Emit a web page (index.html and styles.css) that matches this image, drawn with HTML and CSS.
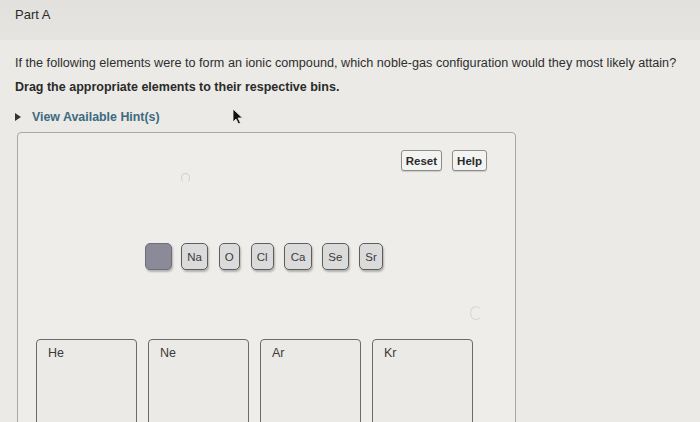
FILE: index.html
```html
<!DOCTYPE html>
<html>
<head>
<meta charset="utf-8">
<link rel="stylesheet" href="styles.css">
</head>
<body>
<div class="page">
  <header class="part-header">Part A</header>
  <main class="content">
    <p class="question">If the following elements were to form an ionic compound, which noble-gas configuration would they most likely attain?</p>
    <p class="instruction">Drag the appropriate elements to their respective bins.</p>
    <div class="hint"><span class="hint-arrow"></span><span class="hint-text">View Available Hint(s)</span></div>
    <section class="workspace">
      <div class="toolbar">
        <button class="btn">Reset</button>
        <button class="btn">Help</button>
      </div>
      <div class="tiles">
        <div class="tile tile-blank"></div>
        <div class="tile">Na</div>
        <div class="tile">O</div>
        <div class="tile">Cl</div>
        <div class="tile">Ca</div>
        <div class="tile">Se</div>
        <div class="tile">Sr</div>
      </div>
      <div class="bins">
        <div class="bin"><span class="bin-label">He</span></div>
        <div class="bin"><span class="bin-label">Ne</span></div>
        <div class="bin"><span class="bin-label">Ar</span></div>
        <div class="bin"><span class="bin-label">Kr</span></div>
      </div>
      <span class="glare glare-a"></span>
      <span class="glare glare-b"></span>
    </section>
  </main>
  <svg class="cursor" width="12" height="17" viewBox="0 0 12 17"><path d="M1 1 L1 14 L4 11 L6.5 16 L8.5 15 L6 10 L10.5 10 Z" fill="#111" stroke="#eee" stroke-width="0.8"/></svg>
</div>
</body>
</html>
```
FILE: styles.css
```css
html, body {
  margin: 0;
  padding: 0;
}
body {
  background: #ebeae6;
  font-family: "Liberation Sans", Arial, sans-serif;
  color: #2a2a2a;
  width: 700px;
  height: 422px;
  overflow: hidden;
}
.page {
  position: relative;
  height: 422px;
}
.part-header {
  height: 40px;
  box-sizing: border-box;
  padding: 7px 0 0 15px;
  font-size: 13px;
  background: linear-gradient(#e2e1dd, #e5e4e0);
  color: #2b2b2b;
}
.content {
  padding: 0 0 0 15px;
}
.question {
  margin: 15px 0 0;
  font-size: 12.65px;
  line-height: 16px;
  color: #2e2e2e;
}
.instruction {
  margin: 8px 0 0;
  font-size: 12.5px;
  font-weight: bold;
  line-height: 16px;
  color: #2a2a2a;
}
.hint {
  display: flex;
  align-items: center;
  margin-top: 14px;
  height: 16px;
}
.hint-arrow {
  width: 0;
  height: 0;
  border-top: 4.5px solid transparent;
  border-bottom: 4.5px solid transparent;
  border-left: 6px solid #333;
  margin-right: 11px;
}
.hint-text {
  font-size: 12.4px;
  font-weight: bold;
  color: #3b6b80;
}
.workspace {
  position: relative;
  margin: 7px 0 0 2px;
  width: 499px;
  height: 320px;
  box-sizing: border-box;
  border: 1px solid #a9a8a5;
  border-radius: 4px;
  background: #eeede9;
}
.toolbar {
  display: flex;
  justify-content: flex-end;
  gap: 10px;
  padding: 17px 28px 0 0;
}
.btn {
  font-family: "Liberation Sans", Arial, sans-serif;
  font-size: 11.5px;
  font-weight: bold;
  color: #2a2a2a;
  background: #f3f3f1;
  border: 1px solid #8d8d8b;
  border-radius: 3px;
  height: 21px;
  padding: 0 4px;
  box-shadow: 0 1px 1px rgba(0,0,0,0.15);
}
.tiles {
  display: flex;
  gap: 10.6px;
  margin: 72px 0 0 127px;
  height: 27px;
}
.tile {
  min-width: 21px;
  height: 27px;
  box-sizing: border-box;
  padding: 0 5.2px;
  border: 1.5px solid #5d5d5e;
  border-radius: 5px;
  background: #dcdbdb;
  font-size: 11.5px;
  color: #3a3a3a;
  display: flex;
  align-items: center;
  justify-content: center;
  box-shadow: 1px 2px 2px rgba(0,0,0,0.25);
}
.tile-blank {
  width: 27px;
  margin-right: -1.6px;
  background: #8b8a99;
  border-color: #6f6e7a;
}
.bins {
  display: flex;
  gap: 11px;
  margin: 69px 0 0 18px;
}
.bin {
  width: 101px;
  height: 100px;
  box-sizing: border-box;
  border: 1.5px solid #6b6b6b;
  border-radius: 4px 4px 0 0;
  background: #ebeae7;
  padding: 3px 0 0 11px;
}
.bin-label {
  font-size: 12.5px;
  color: #3a3a3a;
}
.glare {
  position: absolute;
  width: 7px;
  height: 8px;
  border: 1px solid #cfcfcf;
  border-radius: 50%;
}
.glare-a {
  left: 163px;
  top: 40px;
  border-bottom-color: transparent;
}
.glare-b {
  left: 452px;
  top: 173px;
  width: 10px;
  height: 12px;
  border-color: #d6d6d6 transparent #d6d6d6 #d6d6d6;
}
.cursor {
  position: absolute;
  left: 232px;
  top: 108px;
}
```
